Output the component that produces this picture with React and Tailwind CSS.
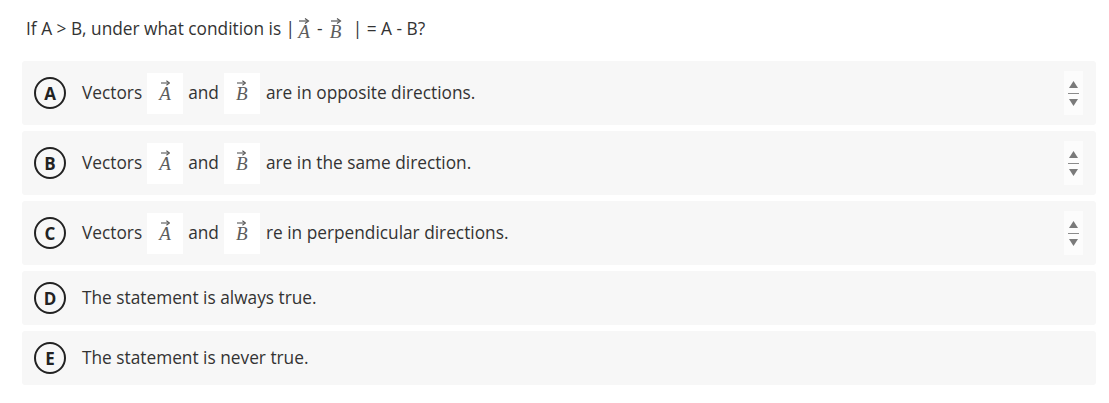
import React from 'react';

const font = { fontFamily: '"Open Sans", "Liberation Sans", sans-serif' };

function Arrow({ w = 10 }) {
  return (
    <svg width={w} height="6" viewBox="0 0 10 6" className="block">
      <path d="M0 3 H8.5" stroke="#555" strokeWidth="1.2" />
      <path d="M6 0.5 L9.5 3 L6 5.5" fill="none" stroke="#555" strokeWidth="1.2" />
    </svg>
  );
}

function VecBox({ letter }) {
  return (
    <div className="flex flex-col items-center justify-start w-[36px] min-w-[36px] h-[41px] bg-white mx-[5px] pt-[7px]">
      <Arrow w={9} />
      <div className="italic text-[19px] leading-[16px] text-[#5c5c5c] [font-family:'Liberation_Serif',serif]">
        {letter}
      </div>
    </div>
  );
}

function VecInline({ letter }) {
  return (
    <div className="flex flex-col items-center mx-[3px] -mt-[1px]">
      <Arrow w={12} />
      <div className="italic text-[19px] leading-[16px] text-[#5c5c5c] [font-family:'Liberation_Serif',serif]">
        {letter}
      </div>
    </div>
  );
}

function Circle({ label }) {
  return (
    <div className="w-[32px] min-w-[32px] h-[32px] rounded-full border-2 border-[#222] flex items-center justify-center text-[17px] font-bold text-[#222] leading-none">
      {label}
    </div>
  );
}

function Spinner() {
  return (
    <div className="ml-auto w-[19px] min-w-[19px] h-[44px] bg-[#fcfcfc] flex flex-col items-center justify-center gap-[5px]">
      <svg width="9" height="7" viewBox="0 0 9 7">
        <path d="M4.5 0 L9 7 H0 Z" fill="#7a7a7a" />
      </svg>
      <div className="w-[11px] h-px bg-[#8a8a8a]" />
      <svg width="9" height="7" viewBox="0 0 9 7">
        <path d="M0 0 H9 L4.5 7 Z" fill="#7a7a7a" />
      </svg>
    </div>
  );
}

const vectorOptions = [
  { label: 'A', rest: 'are in opposite directions.' },
  { label: 'B', rest: 'are in the same direction.' },
  { label: 'C', rest: 're in perpendicular directions.' },
];

const plainOptions = [
  { label: 'D', text: 'The statement is always true.' },
  { label: 'E', text: 'The statement is never true.' },
];

export default function App() {
  return (
    <div className="bg-white w-[1109px] h-[403px] pl-[22px] pr-[13px] pt-[16px] text-[#333]" style={font}>
      <div className="flex items-center pl-[4px] h-[26px] text-[17.3px] mb-[19px]">
        <span>If A &gt; B, under what condition is |</span>
        <VecInline letter="A" />
        <span className="mx-[4px]">-</span>
        <VecInline letter="B" />
        <span className="ml-[8px]">| = A - B?</span>
      </div>

      <div className="flex flex-col gap-[6px]">
        {vectorOptions.map((o) => (
          <div key={o.label} className="flex items-center h-[64px] rounded-[3px] bg-[#f7f7f7] pl-[12px] pr-[13px]">
            <Circle label={o.label} />
            <div className="flex items-center ml-[16px] text-[17.3px]">
              <span>Vectors</span>
              <VecBox letter="A" />
              <span>and</span>
              <VecBox letter="B" />
              <span className="ml-[1px]">{o.rest}</span>
            </div>
            <Spinner />
          </div>
        ))}
        {plainOptions.map((o) => (
          <div key={o.label} className="flex items-center h-[54px] rounded-[3px] bg-[#f7f7f7] pl-[12px]">
            <Circle label={o.label} />
            <span className="ml-[16px] text-[17.3px]">{o.text}</span>
          </div>
        ))}
      </div>
    </div>
  );
}
